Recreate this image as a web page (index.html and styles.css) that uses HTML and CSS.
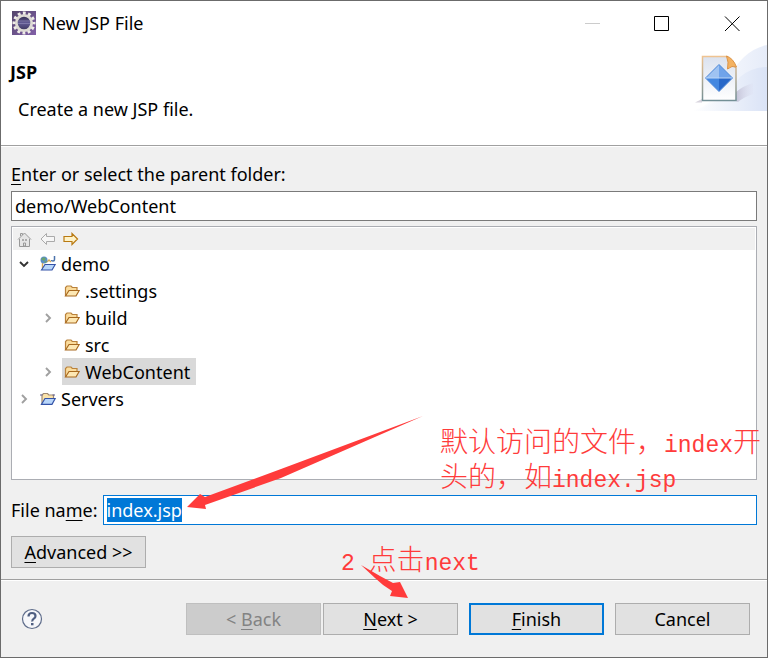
FILE: index.html
```html
<!DOCTYPE html>
<html lang="en">
<head>
<meta charset="utf-8">
<title>New JSP File</title>
<link rel="stylesheet" href="styles.css">
</head>
<body>
<svg class="defs" aria-hidden="true">
  <defs>
    <linearGradient id="folderFill" x1="0" y1="0" x2="0" y2="1"><stop offset="0" stop-color="#fffbe6"/><stop offset="1" stop-color="#f8cf85"/></linearGradient>
    <linearGradient id="blueFill" x1="0" y1="0" x2="1" y2="1"><stop offset="0" stop-color="#f2f8ff"/><stop offset="1" stop-color="#84b2f0"/></linearGradient>
    <symbol id="folder" viewBox="0 0 16 16">
      <path d="M1.500 13V4.500L3 3h4L8.300 4.500h4.700V7" fill="#fbdc9c" stroke="#b9823c" stroke-width="1.200"/>
      <path d="M1.500 13L5 7.500h10.200L12 13z" fill="#fde8b4" stroke="#a8691f" stroke-width="1.200"/>
    </symbol>
    <symbol id="project" viewBox="0 0 16 16">
      <path d="M2 13V4L3.500 2.500h4L8.800 4H13.500V7" fill="#fbe3ab" stroke="#a08a72" stroke-width="1.200"/>
      <path d="M0 4h2.500M12.500 4h2.500" stroke="#5c5f96" stroke-width="1.200"/>
      <path d="M1.500 13.300L5 7.500h10.200L12 13.300z" fill="#b8d6fa" stroke="#3453a8" stroke-width="1.200"/>
    </symbol>
    <symbol id="webproject" viewBox="0 0 16 16">
      <path d="M2.500 12V7M7 6l2-2 2 2" fill="none" stroke="#d9aa55" stroke-width="1.400"/>
      <path d="M1.500 14L5 8.500h10.200L12 14z" fill="#b8d6fa" stroke="#3453a8" stroke-width="1.200"/>
      <circle cx="4" cy="4" r="3.500" fill="#5b8fc7"/>
      <path d="M1 3l3-2 2 2-2 2-2-1zM4 6l2-1 1 1-2 1z" fill="#6ba36d"/>
      <path d="M14.500 0v3.500q0 1.500-1.500 1.500t-1.500-1" fill="none" stroke="#4a72ab" stroke-width="1.500"/>
    </symbol>
    <symbol id="chevron" viewBox="0 0 10 10"><path d="M3 1l4 4-4 4" fill="none" stroke="currentColor" stroke-width="1.900"/></symbol>
  </defs>
</svg>
<main class="dialog">
  <header class="titlebar">
    <svg class="app-icon" viewBox="0 0 24 24" aria-hidden="true">
      <defs><linearGradient id="app" x1="0" y1="0" x2="1" y2="1"><stop offset="0" stop-color="#54466c"/><stop offset="1" stop-color="#8260a8"/></linearGradient>
      <linearGradient id="core" x1="0" y1="0" x2="0" y2="1"><stop offset="0" stop-color="#2d2947"/><stop offset=".5" stop-color="#625b96"/><stop offset="1" stop-color="#393359"/></linearGradient></defs>
      <rect width="24" height="24" fill="url(#app)"/>
      <circle cx="12" cy="12" r="9.800" fill="none" stroke="#efede8" stroke-width="3.400" stroke-dasharray="2.800 2.331" stroke-dashoffset="1.400"/>
      <circle cx="12" cy="12" r="7.700" fill="url(#core)" stroke="#dedbd5" stroke-width="2.800"/>
      <path d="M6 10h12M6 12.500h12" stroke="#8d86b5" stroke-width=".7"/>
    </svg>
    <h1 class="caption">New JSP File</h1>
    <div class="window-controls">
      <button class="window-button" type="button" aria-label="Minimize" disabled><svg viewBox="0 0 16 16"><path d="M1 8.500h15" stroke="#ccc"/></svg></button>
      <button class="window-button" type="button" aria-label="Maximize"><svg viewBox="0 0 16 16"><path d="M.5 1.500h14v14h-14z" fill="none" stroke="#000"/></svg></button>
      <button class="window-button" type="button" aria-label="Close"><svg viewBox="0 0 16 16"><path d="M1 1.500l14.500 14.500M15.500 1.500l-14.500 14.500" stroke="#000"/></svg></button>
    </div>
  </header>
  <section class="banner">
    <div>
      <h2 class="banner-title">JSP</h2>
      <p class="banner-text">Create a new JSP file.</p>
    </div>
    <svg class="banner-art" viewBox="0 0 75 68" aria-hidden="true">
      <defs>
        <linearGradient id="w1" x1="0" x2="1"><stop offset="0" stop-color="#fff"/><stop offset="1" stop-color="#e6ecf9"/></linearGradient>
        <linearGradient id="w2" x1="0" x2="1"><stop offset="0" stop-color="#fff"/><stop offset="1" stop-color="#dae3f6"/></linearGradient>
        <linearGradient id="shade" x1="0" x2="1"><stop offset="0" stop-color="#aaa5c0"/><stop offset="1" stop-color="#dcdcee" stop-opacity=".3"/></linearGradient>
        <linearGradient id="page" x1="0" y1="0" x2="0" y2="1"><stop offset="0" stop-color="#dbe2ef"/><stop offset="1" stop-color="#fff"/></linearGradient>
        <linearGradient id="edge" x1="0" y1="0" x2="0" y2="1"><stop offset="0" stop-color="#efc391"/><stop offset="1" stop-color="#738f96"/></linearGradient>
      </defs>
      <path d="M0 67Q20 62 36 36Q50 6 75 1V67z" fill="url(#w1)"/>
      <path d="M0 67Q30 60 48 33Q60 23 75 23V67z" fill="url(#w2)"/>
      <path d="M44 57V48Q51 42 61 39V50Q52 53 46 58z" fill="url(#shade)" opacity=".6"/>
      <path d="M3 58.500L10 55V58.500z" fill="#d8d4de"/>
      <path d="M10.500 12.500H35L44 24V56.500H10.500z" fill="url(#page)" stroke="url(#edge)" stroke-width="1.500"/>
      <path d="M34.500 12Q41 14 44.500 23Q40 21 35.500 25Q37 18 34.500 12z" fill="#f4b261" stroke="#dc9346"/>
      <path d="M27 20.500L13.500 34H27z" fill="#9fc3f2"/><path d="M27 20.500L40.500 34H27z" fill="#6fa3ea"/>
      <path d="M13.500 34H27V47.500z" fill="#4387e0"/><path d="M40.500 34H27V47.500z" fill="#2767c8"/>
      <path d="M27 20.500L40.500 34L27 47.500L13.500 34z" fill="none" stroke="#4d88d8"/><path d="M14 34H40" stroke="#bcd6f7"/>
    </svg>
  </section>
  <form class="form">
    <div class="content">
      <label class="label" for="folder-path"><u>E</u>nter or select the parent folder:</label>
      <input class="text-field" id="folder-path" type="text" value="demo/WebContent">
      <div class="tree-panel">
        <div class="tree-tools">
          <button class="tool" type="button" aria-label="Home" disabled><svg viewBox="0 0 16 16"><path d="M1 8.500L7.500 2L14 8.500M2.500 8V15.500H12.500V8M3.500 5V2.500H5.500V4" fill="#e5e5e5" stroke="#999"/><path d="M5.500 8.500h1v1h-1zM8.500 8.500h1v1h-1zM6.500 12h2v3h-2z" fill="none" stroke="#999"/></svg></button>
          <button class="tool" type="button" aria-label="Back" disabled><svg viewBox="0 0 16 16"><path d="M1 8L6.500 2.500V5.500H14.500V10.500H6.500V13.500z" fill="#f6f6f6" stroke="#aaa"/></svg></button>
          <button class="tool" type="button" aria-label="Forward"><svg viewBox="0 0 16 16"><path d="M14.500 8L9 2.500V5.500H1V10.500H9V13.500z" fill="#fff3c8" stroke="#b97a12" stroke-width="1.200"/></svg></button>
        </div>
        <ul class="tree">
          <li>
            <div class="row"><svg class="twisty open"><use href="#chevron"/></svg><span class="item"><svg class="icon"><use href="#webproject"/></svg>demo</span></div>
            <ul class="branch">
              <li class="row"><span class="twisty"></span><span class="item"><svg class="icon"><use href="#folder"/></svg>.settings</span></li>
              <li class="row"><svg class="twisty"><use href="#chevron"/></svg><span class="item"><svg class="icon"><use href="#folder"/></svg>build</span></li>
              <li class="row"><span class="twisty"></span><span class="item"><svg class="icon"><use href="#folder"/></svg>src</span></li>
              <li class="row"><svg class="twisty"><use href="#chevron"/></svg><span class="item selected"><svg class="icon"><use href="#folder"/></svg>WebContent</span></li>
            </ul>
          </li>
          <li class="row"><svg class="twisty"><use href="#chevron"/></svg><span class="item"><svg class="icon"><use href="#project"/></svg>Servers</span></li>
        </ul>
      </div>
      <div class="name-row">
        <label for="file-name">File na<u>m</u>e:</label>
        <input class="text-field active" id="file-name" type="text" value="index.jsp">
      </div>
      <button class="button" type="button"><span><u>A</u>dvanced &gt;&gt;</span></button>
    </div>
    <footer class="footer">
      <button class="help" type="button" aria-label="Help"><svg viewBox="0 0 22 22"><circle cx="11" cy="11" r="9.500" fill="#f6f7fa" stroke="#5f6d8b" stroke-width="1.200"/><path d="M7.500 8.500Q7.500 5 11 5T14.500 8Q14.500 9.500 12.800 10.700T11.300 13.500" fill="none" stroke="#4f5f82" stroke-width="2.200"/><path d="M10 15h2.500v2.300H10z" fill="#4f5f82"/></svg></button>
      <div class="pair">
        <button class="button" type="button" disabled><span>&lt; <u>B</u>ack</span></button>
        <button class="button" type="button"><span><u>N</u>ext &gt;</span></button>
      </div>
      <button class="button primary" type="submit"><span><u>F</u>inish</span></button>
      <button class="button" type="button">Cancel</button>
    </footer>
  </form>
  <p class="note note-file">默认访问的文件，<span class="latin">index</span>开<br>头的，如<span class="latin">index.jsp</span></p>
  <p class="note note-next"><span class="latin">2 </span>点击<span class="latin">next</span></p>
  <svg class="arrow arrow-file" viewBox="0 0 236 94" aria-hidden="true"><path d="M236 0L94 53L18 81L13 78L0 91L19 93L18 89L94 62z"/></svg>
  <svg class="arrow arrow-next" viewBox="0 0 48 34" aria-hidden="true"><path d="M0 0L19 11L32 18L39 17L47 33L29 31L31 26Q21 20 14 13z"/></svg>
</main>
<script src="script.js"></script>
</body>
</html>
```
FILE: styles.css
```css
* { box-sizing: border-box; }
body {
  margin: 0;
  font: 18px/24px "Noto Sans", "Open Sans", sans-serif;
  color: #000;
}
h1, h2, p, ul { margin: 0; padding: 0; font-weight: 400; font-size: 18px; }
ul { list-style: none; }
button, input { font: inherit; color: inherit; border-radius: 0; }
u { text-decoration-thickness: 1px; text-underline-offset: 3px; }
.defs { position: absolute; width: 0; height: 0; }
.dialog {
  position: relative;
  display: flex;
  flex-direction: column;
  min-height: 100vh;
  border: 1px solid #6b6b6b;
  background: #f0f0f0;
  overflow: hidden;
}
.titlebar { display: flex; align-items: center; height: 43px; padding-left: 11px; background: #fff; }
.app-icon { width: 24px; height: 24px; }
.caption { flex: 1; padding-left: 6px; }
.window-controls { display: flex; }
.window-button { width: 70px; height: 42px; padding: 0; border: 0; background: none; }
.window-button svg { display: block; width: 16px; height: 16px; margin: 0 auto; }
.banner {
  display: flex;
  justify-content: space-between;
  height: 102px;
  padding: 0 0 0 9px;
  background: #fff;
  border-bottom: 1px solid #a0a0a0;
}
.banner-title { padding-top: 16px; font-weight: 700; }
.banner-text { padding: 13px 0 0 8px; }
.banner-art { width: 75px; height: 68px; }
.form { display: flex; flex: 1; flex-direction: column; border-top: 1px solid #fff; }
.content { display: flex; flex: 1; flex-direction: column; align-items: flex-start; padding: 15px 10px 11px; }
.label { padding-bottom: 5px; }
.text-field { width: 100%; height: 30px; padding: 0 3px; border: 1px solid #7a7a7a; background: #fff; outline: 0; }
.active { border-color: #0078d7; }
.text-field::selection { background: #0078d7; color: #fff; }
.tree-panel { flex: 1; width: 100%; min-height: 200px; margin: 5px 0 15px; padding: 1px; border: 1px solid #abadb3; background: #fff; }
.tree-tools { display: flex; align-items: center; gap: 7px; height: 22px; padding-left: 4px; background: #f0f0f0; }
.tool { width: 16px; height: 16px; padding: 0; border: 0; background: none; }
.tool svg { display: block; width: 16px; height: 16px; }
.tree { padding-left: 6px; }
.branch { padding-left: 24px; }
.row { display: flex; align-items: center; height: 27px; }
.twisty { width: 10px; height: 10px; margin-right: 9px; color: #a0a0a0; }
.open { color: #333; transform: rotate(90deg); }
.item { display: flex; align-items: center; height: 27px; padding: 0 6px 0 2px; }
.selected { background: #d9d9d9; }
.icon { width: 16px; height: 16px; margin-right: 5px; }
.name-row { display: flex; align-items: center; gap: 5px; width: 100%; margin-bottom: 11px; white-space: nowrap; }
.name-row .text-field { flex: 1; min-width: 0; }
.button { width: 135px; height: 32px; padding: 0; border: 1px solid #adadad; background: #e1e1e1; }
.button:disabled { border-color: #bfbfbf; background: #ccc; color: #838383; }
.primary { border: 2px solid #0078d7; }
.footer { display: flex; align-items: center; gap: 11px; height: 78px; padding: 0 17px 0 20px; border-top: 1px solid #a0a0a0; box-shadow: inset 0 1px #fff; }
.help { width: 22px; height: 22px; margin-right: auto; padding: 0; border: 0; background: none; }
.help svg { display: block; width: 22px; height: 22px; }
.pair { display: flex; gap: 2px; }
.note { position: absolute; color: #ff3b3b; font: 300 28px/35px "Noto Sans CJK SC", sans-serif; white-space: nowrap; }
.latin { font: 23px/0 "Liberation Mono", monospace; }
.note-file { left: 439px; top: 422px; }
.note-next { left: 340px; top: 540px; }
.arrow { position: absolute; fill: #ff3b3b; }
.arrow-file { left: 186px; top: 415px; width: 236px; height: 94px; }
.arrow-next { left: 360px; top: 564px; width: 48px; height: 34px; }
```
FILE: script.js
```js
const fileName = document.getElementById("file-name");
fileName.focus();
fileName.select();
```
